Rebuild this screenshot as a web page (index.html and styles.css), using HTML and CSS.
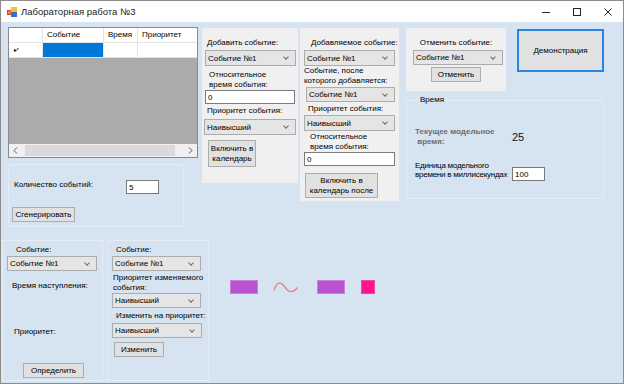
FILE: index.html
```html
<!DOCTYPE html>
<html lang="ru">
<head>
    <meta charset="UTF-8">
    <title>Лабораторная работа №3</title>
    <link rel="stylesheet" href="styles.css">
</head>
<body>
<div class="window">
    <div class="titlebar">
        <svg class="app-icon" viewBox="0 0 10 10">
            <rect x="0" y="3" width="5" height="5" fill="#d9442e"/>
            <rect x="4" y="0" width="6" height="5" fill="#f2c12e"/>
            <rect x="4" y="5" width="6" height="5" fill="#2f6fd0"/>
            <rect x="1" y="4" width="3" height="3" fill="#f07a5a"/>
        </svg>
        <span class="title">Лабораторная работа №3</span>
        <div class="caption-buttons">
            <div class="cap-btn"><svg width="8" height="8" viewBox="0 0 8 8"><line x1="0" y1="4.5" x2="8" y2="4.5" stroke="#222" stroke-width="1"/></svg></div>
            <div class="cap-btn"><svg width="8" height="8" viewBox="0 0 8 8"><rect x="0.5" y="0.5" width="7" height="7" fill="none" stroke="#222" stroke-width="1"/></svg></div>
            <div class="cap-btn"><svg width="8" height="8" viewBox="0 0 8 8"><path d="M0.5 0.5 L7.5 7.5 M7.5 0.5 L0.5 7.5" stroke="#222" stroke-width="1"/></svg></div>
        </div>
    </div>

    <div class="client">
        <div class="top-row">
            <div class="left-col">
                <!-- events grid -->
                <div class="grid">
                    <div class="grid-row grid-head">
                        <div class="cell rowhead"></div>
                        <div class="cell c-event">Событие</div>
                        <div class="cell c-time">Время</div>
                        <div class="cell c-prio">Приоритет</div>
                    </div>
                    <div class="grid-row">
                        <div class="cell rowhead"><span class="new-row">▸*</span></div>
                        <div class="cell c-event selected"></div>
                        <div class="cell c-time"></div>
                        <div class="cell c-prio"></div>
                    </div>
                    <div class="grid-empty"></div>
                    <div class="hscroll">
                        <svg class="scroll-arrow" width="5" height="7" viewBox="0 0 5 7"><path d="M4 0.5 L1 3.5 L4 6.5" fill="none" stroke="#555" stroke-width="1"/></svg>
                        <div class="thumb"></div>
                        <svg class="scroll-arrow" width="5" height="7" viewBox="0 0 5 7"><path d="M1 0.5 L4 3.5 L1 6.5" fill="none" stroke="#555" stroke-width="1"/></svg>
                    </div>
                </div>

                <div class="soft-panel count-panel">
                    <div class="count-row">
                        <span class="lbl count-lbl">Количество событий:</span>
                        <input class="textbox count-input" type="text" value="5">
                    </div>
                    <button class="btn count-btn">Сгенерировать</button>
                </div>
            </div>

            <!-- add event -->
            <div class="panel add-panel">
                <span class="lbl add-title">Добавить событие:</span>
                <div class="combo add-combo">Событие №1</div>
                <span class="lbl add-rel">Относительное<br>время события:</span>
                <input class="textbox add-time" type="text" value="0">
                <span class="lbl add-prio-lbl">Приоритет события:</span>
                <div class="combo add-prio">Наивысший</div>
                <button class="btn add-btn">Включить в<br>календарь</button>
            </div>

            <!-- insert after event -->
            <div class="panel insert-panel">
                <span class="lbl ins-title">Добавляемое событие:</span>
                <div class="combo ins-combo">Событие №1</div>
                <span class="lbl ins-after">Событие, после<br>которого добавляется:</span>
                <div class="combo ins-after-combo">Событие №1</div>
                <span class="lbl ins-prio-lbl">Приоритет события:</span>
                <div class="combo ins-prio">Наивысший</div>
                <span class="lbl ins-rel">Относительное<br>время события:</span>
                <input class="textbox ins-time" type="text" value="0">
                <button class="btn ins-btn">Включить в<br>календарь после</button>
            </div>

            <div class="right-col">
                <div class="right-top">
                    <div class="panel cancel-panel">
                        <span class="lbl cancel-title">Отменить событие:</span>
                        <div class="combo cancel-combo">Событие №1</div>
                        <button class="btn cancel-btn">Отменить</button>
                    </div>
                    <button class="btn demo-btn">Демонстрация</button>
                </div>

                <fieldset class="time-group">
                    <legend>Время</legend>
                    <div class="time-row">
                        <span class="time-lbl">Текущее модельное<br>&nbsp;время:</span>
                        <span class="time-value">25</span>
                    </div>
                    <div class="unit-row">
                        <span class="lbl unit-lbl">Единица модельного<br>времени в миллисекундах</span>
                        <input class="textbox unit-input" type="text" value="100">
                    </div>
                </fieldset>
            </div>
        </div>

        <div class="bottom-row">
            <div class="soft-panel define-panel">
                <span class="lbl def-title">Событие:</span>
                <div class="combo def-combo">Событие №1</div>
                <span class="lbl def-when">Время наступления:</span>
                <span class="lbl def-prio">Приоритет:</span>
                <button class="btn def-btn">Определить</button>
            </div>

            <div class="soft-panel change-panel">
                <span class="lbl chg-title">Событие:</span>
                <div class="combo chg-combo">Событие №1</div>
                <span class="lbl chg-cur">Приоритет изменяемого<br>события:</span>
                <div class="combo chg-cur-combo">Наивысший</div>
                <span class="lbl chg-new">Изменить на приоритет:</span>
                <div class="combo chg-new-combo">Наивысший</div>
                <button class="btn chg-btn">Изменить</button>
            </div>

            <!-- demo figures -->
            <div class="shapes">
                <div class="block"></div>
                <svg class="wave" width="26" height="12" viewBox="0 0 26 12">
                    <path d="M1 9.5 C2.5 5 4.5 1.5 7 2 C10 2.5 12 7 15 9.5 C18 11.5 21 11 24.5 6.5" fill="none" stroke="#e97f82" stroke-width="1.3"/>
                </svg>
                <div class="block block-second"></div>
                <div class="square"></div>
            </div>
        </div>
    </div>
</div>
</body>
</html>
```

FILE: styles.css
```css
/* General styles */
* {
    box-sizing: border-box;
}

body {
    margin: 0;
    font-family: "Liberation Sans", Arial, sans-serif;
    font-size: 8px;
    color: #000;
    background: #fff;
}

.window {
    width: 624px;
    height: 384px;
    border: 1px solid #8c8c8c;
    display: flex;
    flex-direction: column;
    overflow: hidden;
}

/* Title bar */
.titlebar {
    height: 21px;
    flex-shrink: 0;
    background: #fff;
    display: flex;
    align-items: center;
}

.app-icon {
    width: 10px;
    height: 10px;
    margin-left: 6px;
}

.title {
    margin-left: 4px;
    font-size: 9.5px;
    color: #222;
}

.caption-buttons {
    margin-left: auto;
    display: flex;
    height: 100%;
}

.cap-btn {
    width: 31px;
    display: flex;
    align-items: center;
    justify-content: center;
}

.client {
    flex: 1;
    background: #d6e3f1;
}

/* Common controls */
.lbl {
    display: block;
    line-height: 10px;
    white-space: nowrap;
}

.combo {
    position: relative;
    display: flex;
    align-items: center;
    background: #e5e5e5;
    border: 1px solid #acacac;
    padding-left: 2px;
    white-space: nowrap;
}

.combo::after {
    content: "";
    position: absolute;
    right: 7px;
    top: 50%;
    width: 3px;
    height: 3px;
    margin-top: -3px;
    border-right: 1px solid #6a6a6a;
    border-bottom: 1px solid #6a6a6a;
    transform: rotate(45deg);
}

.textbox {
    display: block;
    background: #fff;
    border: 1px solid #7a7a7a;
    font-family: inherit;
    font-size: 8px;
    padding: 0 0 0 2px;
    margin: 0;
    outline: none;
}

.btn {
    display: block;
    background: #e1e1e1;
    border: 1px solid #adadad;
    font-family: inherit;
    font-size: 8px;
    line-height: 10px;
    padding: 0;
    margin: 0;
    color: #000;
}

.panel {
    background: #f0f0f0;
    flex-shrink: 0;
}

.soft-panel {
    border: 1px solid #e4ecf5;
    flex-shrink: 0;
}

/* Layout rows */
.top-row {
    display: flex;
    align-items: flex-start;
    height: 218px;
}

.left-col {
    width: 201px;
    flex-shrink: 0;
    padding: 5px 0 0 7px;
}

/* Grid */
.grid {
    width: 190px;
    height: 131px;
    border: 1px solid #8a8a8a;
    display: flex;
    flex-direction: column;
    background: #fff;
}

.grid-row {
    display: flex;
    height: 15px;
    border-bottom: 1px solid #e3e3e3;
    flex-shrink: 0;
}

.cell {
    height: 100%;
    border-right: 1px solid #e3e3e3;
    padding-left: 4px;
    line-height: 14px;
    white-space: nowrap;
}

.rowhead {
    width: 34px;
}

.c-event {
    width: 61px;
}

.c-time {
    width: 34px;
}

.c-prio {
    flex: 1;
    border-right: none;
}

.selected {
    background: #0078d7;
}

.new-row {
    font-size: 6px;
    margin-left: 1px;
    letter-spacing: -0.5px;
}

.grid-empty {
    flex: 1;
    background: #ababab;
}

.hscroll {
    height: 13px;
    flex-shrink: 0;
    background: #f0f0f0;
    display: flex;
    align-items: center;
}

.scroll-arrow {
    margin: 0 4px;
}

.thumb {
    flex: 1;
    height: 11px;
    background: #dadada;
    margin: 0 9px 0 3px;
}

/* Count panel */
.count-panel {
    width: 176px;
    height: 63px;
    margin-top: 6px;
}

.count-row {
    display: flex;
    align-items: flex-start;
    margin-top: 15px;
}

.count-lbl {
    width: 112px;
    margin: 0 0 0 5px;
}

.count-input {
    width: 33px;
    height: 14px;
}

.count-btn {
    width: 63px;
    height: 15px;
    margin: 13px 0 0 3px;
}

/* Add panel */
.add-panel {
    width: 96px;
    height: 155px;
    margin-top: 6px;
}

.add-title {
    margin: 10px 0 0 5px;
}

.add-combo {
    width: 91px;
    height: 16px;
    margin: 2px 0 0 3px;
}

.add-rel {
    margin: 4px 0 0 7px;
}

.add-time {
    width: 90px;
    height: 14px;
    margin-left: 3px;
}

.add-prio-lbl {
    margin: 2px 0 0 5px;
}

.add-prio {
    width: 92px;
    height: 16px;
    margin: 3px 0 0 2px;
}

.add-btn {
    width: 48px;
    height: 27px;
    margin: 5px 0 0 6px;
}

/* Insert panel */
.insert-panel {
    width: 99px;
    height: 173px;
    margin: 6px 0 0 2px;
}

.ins-title {
    margin: 10px 0 0 11px;
}

.ins-combo {
    width: 91px;
    height: 16px;
    margin: 2px 0 0 4px;
}

.ins-after {
    margin-left: 4px;
}

.ins-after-combo {
    width: 89px;
    height: 15px;
    margin: 1px 0 0 6px;
}

.ins-prio-lbl {
    margin: 2px 0 0 8px;
}

.ins-prio {
    width: 91px;
    height: 16px;
    margin: 1px 0 0 4px;
}

.ins-rel {
    margin: 1px 0 0 10px;
}

.ins-time {
    width: 91px;
    height: 14px;
    margin-left: 4px;
}

.ins-btn {
    width: 73px;
    height: 25px;
    margin: 7px 0 0 5px;
}

/* Right column */
.right-col {
    margin-left: 7px;
    width: 198px;
    flex-shrink: 0;
}

.right-top {
    display: flex;
    align-items: flex-start;
}

.cancel-panel {
    width: 100px;
    height: 63px;
    margin-top: 6px;
    display: flex;
    flex-direction: column;
    align-items: center;
}

.cancel-title {
    margin-top: 10px;
}

.cancel-combo {
    align-self: flex-start;
    width: 90px;
    height: 15px;
    margin: 2px 0 0 7px;
}

.cancel-btn {
    width: 50px;
    height: 15px;
    margin-top: 2px;
}

.demo-btn {
    width: 87px;
    height: 43px;
    margin: 7px 0 0 11px;
    border: 2px solid #2a86dc;
}

/* Time group */
.time-group {
    width: 198px;
    height: 104px;
    margin: 4px 0 0 0;
    padding: 0 0 0 8px;
    border: 1px solid #e4ecf5;
}

.time-group legend {
    margin-left: 4px;
    padding: 0 1px;
    line-height: 10px;
}

.time-row {
    display: flex;
    align-items: center;
    margin-top: 22px;
}

.time-lbl {
    width: 97px;
    font-weight: bold;
    color: #6d6d6d;
    line-height: 10px;
    white-space: nowrap;
}

.time-value {
    font-size: 11px;
    color: #111;
}

.unit-row {
    display: flex;
    align-items: flex-start;
    margin-top: 14px;
}

.unit-lbl {
    width: 97px;
    line-height: 9px;
    letter-spacing: -0.25px;
}

.unit-input {
    width: 33px;
    height: 14px;
    margin-top: 6px;
}

/* Bottom row */
.bottom-row {
    display: flex;
    align-items: flex-start;
}

.define-panel {
    width: 101px;
    height: 141px;
    margin-left: 1px;
}

.def-title {
    margin: 4px 0 0 13px;
}

.def-combo {
    width: 90px;
    height: 15px;
    margin: 1px 0 0 4px;
}

.def-when {
    margin: 10px 0 0 9px;
}

.def-prio {
    margin: 36px 0 0 11px;
}

.def-btn {
    width: 61px;
    height: 15px;
    margin: 26px 0 0 20px;
}

.change-panel {
    width: 102px;
    height: 141px;
    margin-left: 4px;
}

.chg-title {
    margin: 4px 0 0 8px;
}

.chg-combo {
    width: 89px;
    height: 15px;
    margin: 1px 0 0 4px;
}

.chg-cur {
    margin: 2px 0 0 5px;
}

.chg-cur-combo {
    width: 89px;
    height: 15px;
    margin-left: 4px;
}

.chg-new {
    margin: 3px 0 0 8px;
}

.chg-new-combo {
    width: 90px;
    height: 15px;
    margin: 2px 0 0 4px;
}

.chg-btn {
    width: 50px;
    height: 15px;
    margin: 4px 0 0 6px;
}

/* Figures */
.shapes {
    display: flex;
    align-items: center;
    margin: 40px 0 0 21px;
}

.block {
    width: 28px;
    height: 14px;
    background: #b952cf;
    border: 1px solid #c683d8;
}

.wave {
    margin-left: 15px;
}

.block-second {
    margin-left: 18px;
}

.square {
    width: 14px;
    height: 14px;
    margin-left: 16px;
    background: #ff148f;
    border: 1px solid #f0479f;
}
```
